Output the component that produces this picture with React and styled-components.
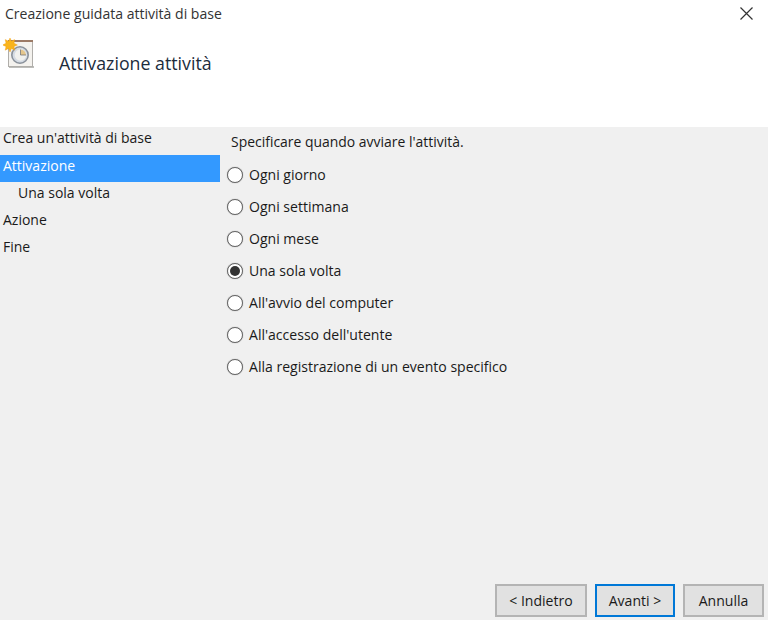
import React from 'react'
import styled, { createGlobalStyle } from 'styled-components'

const GlobalStyle = createGlobalStyle`
  html, body {
    margin: 0;
    padding: 0;
    background: #f0f0f0;
  }
  * {
    box-sizing: border-box;
  }
`

const Window = styled.div`
  width: 768px;
  height: 620px;
  display: flex;
  flex-direction: column;
  overflow: hidden;
  font-family: 'Open Sans', 'Noto Sans', sans-serif;
  font-size: 14px;
  color: #1a1a1a;
  background: #f0f0f0;
`

const Header = styled.header`
  height: 127px;
  flex-shrink: 0;
  background: #fff;
  display: flex;
  flex-direction: column;
`

const TitleBar = styled.div`
  height: 26px;
  padding: 0 15px 0 5px;
  display: flex;
  align-items: center;
  justify-content: space-between;
  font-size: 14.05px;
  color: #333;
`

const CloseButton = styled.svg`
  width: 13px;
  height: 13px;
  stroke: #333;
  stroke-width: 1.2;
  fill: none;
`

const Heading = styled.div`
  display: flex;
  align-items: flex-start;
  padding: 12px 0 0 3px;
`

const HeadingText = styled.h1`
  margin: 13px 0 0 24px;
  font-size: 17.75px;
  font-weight: 400;
  line-height: 24px;
  color: #1c2c3c;
`

const Body = styled.main`
  flex: 1;
  display: flex;
  min-height: 0;
`

const Sidebar = styled.nav`
  width: 220px;
  flex-shrink: 0;
  display: flex;
  flex-direction: column;
`

const Step = styled.div`
  height: 27px;
  display: flex;
  align-items: center;
  padding: 0 0 6px ${({ $indent }) => ($indent ? 18 : 3)}px;
  margin-bottom: ${({ $gap }) => ($gap ? 1 : 0)}px;
  background: ${({ $active }) => ($active ? '#3399ff' : 'transparent')};
  color: ${({ $active }) => ($active ? '#fff' : '#1a1a1a')};
  font-size: 14px;
`

const Content = styled.section`
  flex: 1;
  display: flex;
  flex-direction: column;
  padding: 5px 4px 3px 5px;
`

const Prompt = styled.p`
  margin: 0 0 8px 6px;
  height: 19px;
  line-height: 19px;
  font-size: 13.95px;
`

const Options = styled.div`
  display: flex;
  flex-direction: column;
`

const Option = styled.label`
  height: 32px;
  display: flex;
  align-items: center;
  gap: 6px;
  padding-left: 2px;
  font-size: 14.05px;
`

const OptionText = styled.span`
  margin-top: -2px;
`

const Radio = styled.span`
  width: 16px;
  height: 16px;
  border-radius: 50%;
  border: 1px solid #666;
  background: #fff;
  box-shadow: 0 0 1px #888;
  display: flex;
  align-items: center;
  justify-content: center;

  &::after {
    content: '';
    width: 10px;
    height: 10px;
    border-radius: 50%;
    background: ${({ $checked }) => ($checked ? '#333' : 'transparent')};
  }
`

const Footer = styled.footer`
  margin-top: auto;
  display: flex;
  justify-content: flex-end;
  gap: 8px;
`

const Button = styled.button`
  width: ${({ $width }) => $width}px;
  height: 33px;
  padding: 0;
  background: #e1e1e1;
  border: ${({ $primary }) => ($primary ? '2px solid #0078d7' : '2px solid #b4b4b4')};
  font-family: inherit;
  font-size: 14.05px;
  color: #1a1a1a;
`

const ClockIcon = () => (
  <svg width="32" height="32" viewBox="0 0 32 32">
    <rect x="6" y="28" width="25" height="2" fill="#bdbdba" />
    <rect x="5.5" y="2.5" width="24" height="26" fill="#f4f2ee" stroke="#b0aeaa" />
    <rect x="5" y="2" width="25" height="2" fill="#9c7a66" />
    <circle cx="17" cy="17" r="8.2" fill="#d5dbe3" stroke="#8b929b" strokeWidth="1.6" />
    <circle cx="17.5" cy="17" r="5.8" fill="#f1f1ee" />
    <path d="M17.5 11.5v5.5h5.5a5.5 5.5 0 0 0-5.5-5.5z" fill="#e4c68d" />
    <path d="M17.5 11.5v5.5h5.5" fill="none" stroke="#777" strokeWidth="0.8" />
    <path
      d="M7 0l1.4 3.2L11.6 1.6l-.6 3.6L14.4 7l-3.4 1.4.6 3.8-3.2-1.8L7 14l-1.4-3.6-3.4 1.8.8-3.8L-.4 7 3 5.2 2.2 1.6l3.4 1.6z"
      fill="#f9b41c"
      stroke="#f09a10"
      strokeWidth="0.4"
    />
  </svg>
)

const steps = [
  { label: "Crea un'attività di base", gap: true },
  { label: 'Attivazione', active: true },
  { label: 'Una sola volta', indent: true },
  { label: 'Azione' },
  { label: 'Fine' },
]

const options = [
  'Ogni giorno',
  'Ogni settimana',
  'Ogni mese',
  'Una sola volta',
  "All'avvio del computer",
  "All'accesso dell'utente",
  'Alla registrazione di un evento specifico',
]

export default function App() {
  return (
    <Window>
      <GlobalStyle />
      <Header>
        <TitleBar>
          <span>Creazione guidata attività di base</span>
          <CloseButton viewBox="0 0 13 13">
            <path d="M.5.5l12 12M12.5.5l-12 12" />
          </CloseButton>
        </TitleBar>
        <Heading>
          <ClockIcon />
          <HeadingText>Attivazione attività</HeadingText>
        </Heading>
      </Header>
      <Body>
        <Sidebar>
          {steps.map(step => (
            <Step key={step.label} $active={step.active} $indent={step.indent} $gap={step.gap}>
              {step.label}
            </Step>
          ))}
        </Sidebar>
        <Content>
          <Prompt>Specificare quando avviare l'attività.</Prompt>
          <Options>
            {options.map(option => (
              <Option key={option}>
                <Radio $checked={option === 'Una sola volta'} />
                <OptionText>{option}</OptionText>
              </Option>
            ))}
          </Options>
          <Footer>
            <Button $width={92}>&lt; Indietro</Button>
            <Button $width={80} $primary>
              Avanti &gt;
            </Button>
            <Button $width={81}>Annulla</Button>
          </Footer>
        </Content>
      </Body>
    </Window>
  )
}
